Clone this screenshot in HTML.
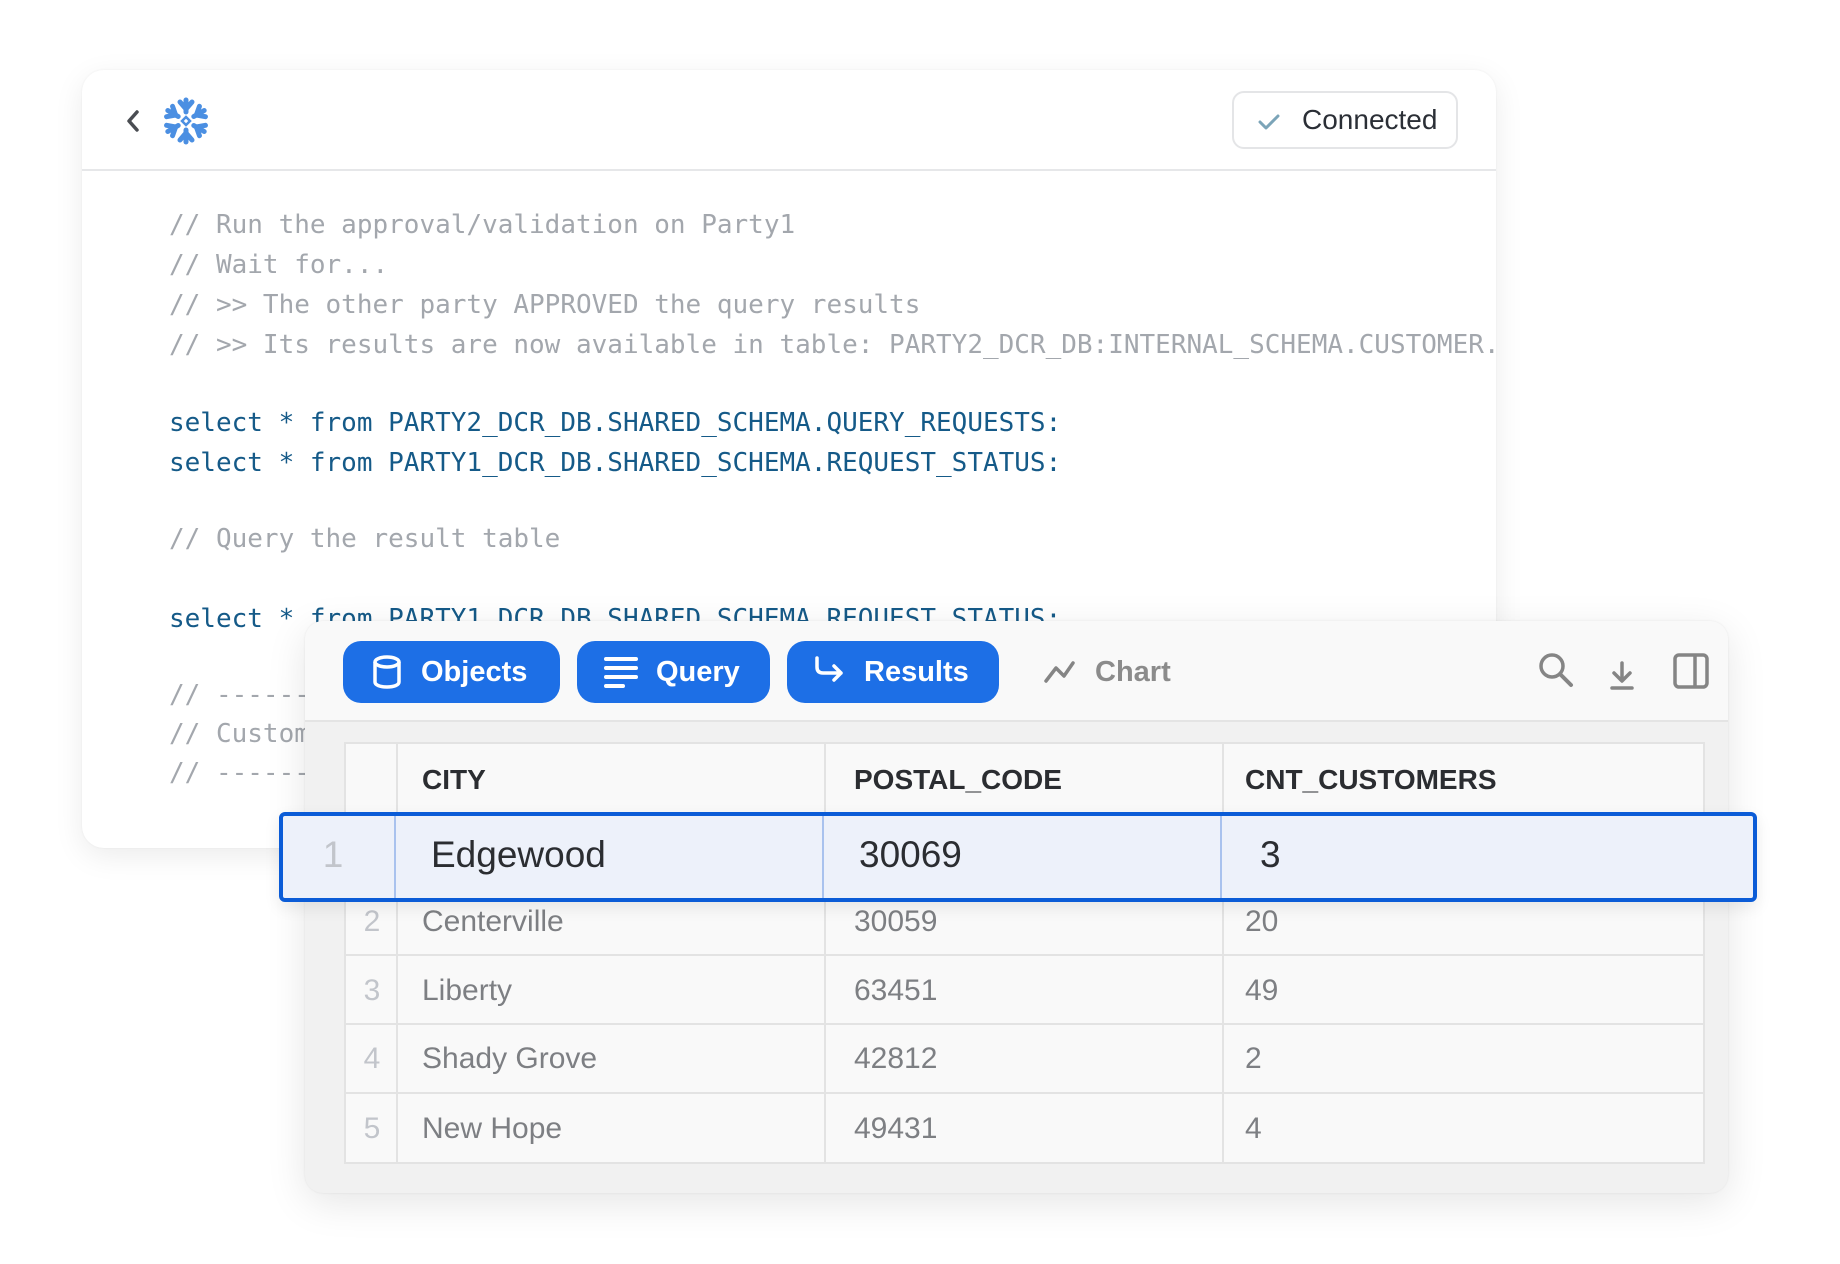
<!DOCTYPE html>
<html><head><meta charset="utf-8"><style>
*{margin:0;padding:0;box-sizing:border-box}
body{width:1840px;height:1264px;background:#fff;position:relative;overflow:hidden;font-family:"Liberation Sans",sans-serif}
.card{position:absolute;left:82px;top:70px;width:1414px;height:778px;background:#fff;border-radius:22px;box-shadow:0 8px 30px rgba(0,0,0,.08),0 0 2px rgba(0,0,0,.06);overflow:hidden}
.hdr{position:absolute;left:0;top:0;width:100%;height:101px;border-bottom:2px solid #e6e7e9}
.conn{position:absolute;left:1150px;top:21px;width:226px;height:58px;border:2px solid #e4e5e7;border-radius:12px;font-size:28px;color:#2b2f36;line-height:54px;padding-left:68px}
.code{position:absolute;left:87px;font-family:"DejaVu Sans Mono","Liberation Mono",monospace;font-size:26px;white-space:pre;line-height:40px;height:40px}
.c{color:#a3a7ad}.s{color:#155a88}
.panel{position:absolute;left:305px;top:621px;width:1423px;height:572px;background:#f1f1f1;border-radius:18px;box-shadow:0 10px 40px rgba(0,0,0,.10),0 0 2px rgba(0,0,0,.08);overflow:hidden}
.tb{position:absolute;left:0;top:0;width:100%;height:101px;background:#f9f9f9;border-bottom:2px solid #e4e4e4}
.btn{position:absolute;top:20px;height:62px;background:#1d6fe6;border-radius:18px;color:#fff;font-weight:bold;font-size:29px;line-height:62px}
.btn svg{position:absolute}
.btn span{position:absolute}
.tbl{position:absolute;left:344px;top:742px;width:1361px;height:422px;background:#f9f9f9;border:2px solid #e3e3e3}
.hl{position:absolute;left:279px;top:812px;width:1478px;height:90px;background:#edf1fa;border:4px solid #0b5cd7;border-radius:6px;box-shadow:0 6px 16px rgba(0,0,0,.08)}
.t{position:absolute;font-size:30px;color:#7d7f83;line-height:36px}
.n{position:absolute;font-size:30px;color:#c2c5cb;width:52px;text-align:center;line-height:36px;left:346px}
.h{position:absolute;font-size:28px;font-weight:bold;color:#2b2d31;line-height:36px;top:762px}
</style></head><body>
<div class="card">
 <div class="hdr">
  <svg style="position:absolute;left:43px;top:38px" width="16" height="26" viewBox="0 0 16 26"><path d="M12 4 L4 13 L12 22" fill="none" stroke="#4a4d52" stroke-width="3.5" stroke-linecap="round" stroke-linejoin="round"/></svg>
  <svg style="position:absolute;left:80px;top:27px" width="48" height="48" viewBox="-24 -24 48 48">
   <g fill="none" stroke="#4b8fe2" stroke-width="5" stroke-linecap="round" stroke-linejoin="round">
    <g><path d="M0 -9 V-21"/><path d="M-6 -19 L0 -12 L6 -19"/></g>
    <g transform="rotate(60)"><path d="M0 -9 V-21"/><path d="M-6 -19 L0 -12 L6 -19"/></g>
    <g transform="rotate(120)"><path d="M0 -9 V-21"/><path d="M-6 -19 L0 -12 L6 -19"/></g>
    <g transform="rotate(180)"><path d="M0 -9 V-21"/><path d="M-6 -19 L0 -12 L6 -19"/></g>
    <g transform="rotate(240)"><path d="M0 -9 V-21"/><path d="M-6 -19 L0 -12 L6 -19"/></g>
    <g transform="rotate(300)"><path d="M0 -9 V-21"/><path d="M-6 -19 L0 -12 L6 -19"/></g>
   </g>
   <path d="M0 -4 L4 0 L0 4 L-4 0Z" fill="none" stroke="#4b8fe2" stroke-width="2.5"/>
  </svg>
  <div class="conn"><svg style="position:absolute;left:24px;top:20px" width="22" height="18" viewBox="0 0 22 18"><path d="M2 9 L8 15 L20 3" fill="none" stroke="#7ba4b8" stroke-width="3" stroke-linecap="round" stroke-linejoin="round"/></svg>Connected</div>
 </div>
 <div class="code c" style="top:135px">// Run the approval/validation on Party1</div>
 <div class="code c" style="top:175px">// Wait for...</div>
 <div class="code c" style="top:215px">// &gt;&gt; The other party APPROVED the query results</div>
 <div class="code c" style="top:255px">// &gt;&gt; Its results are now available in table: PARTY2_DCR_DB:INTERNAL_SCHEMA.CUSTOMER.</div>
 <div class="code s" style="top:333px">select * from PARTY2_DCR_DB.SHARED_SCHEMA.QUERY_REQUESTS:</div>
 <div class="code s" style="top:373px">select * from PARTY1_DCR_DB.SHARED_SCHEMA.REQUEST_STATUS:</div>
 <div class="code c" style="top:449px">// Query the result table</div>
 <div class="code s" style="top:529px">select * from PARTY1_DCR_DB.SHARED_SCHEMA.REQUEST_STATUS:</div>
 <div class="code c" style="top:605px">// ------</div>
 <div class="code c" style="top:644px">// Custom</div>
 <div class="code c" style="top:683px">// ------</div>
 <div class="code s" style="top:770px">select</div>
</div>

<div class="panel">
 <div class="tb">
  <div class="btn" style="left:38px;width:217px"><svg style="left:28px;top:14px" width="32" height="34" viewBox="0 0 32 34"><ellipse cx="16" cy="7" rx="12" ry="5" fill="none" stroke="#fff" stroke-width="3.5"/><path d="M4 7 V27 C4 30 9 32 16 32 C23 32 28 30 28 27 V7" fill="none" stroke="#fff" stroke-width="3.5"/></svg><span style="left:78px">Objects</span></div>
  <div class="btn" style="left:272px;width:193px"><svg style="left:26px;top:14px" width="36" height="34" viewBox="0 0 36 34"><g stroke="#fff" stroke-width="4" stroke-linecap="round"><path d="M3 4H33M3 13H33M3 22H33M3 31H20"/></g></svg><span style="left:79px">Query</span></div>
  <div class="btn" style="left:482px;width:212px"><svg style="left:26px;top:14px" width="34" height="30" viewBox="0 0 34 30"><path d="M4 3 V12 C4 16 6 18 10 18 H28 M21 11 L28 18 L21 25" fill="none" stroke="#fff" stroke-width="3.5" stroke-linecap="round" stroke-linejoin="round"/></svg><span style="left:77px">Results</span></div>
  <svg style="position:absolute;left:738px;top:39px" width="34" height="26" viewBox="0 0 34 26"><path d="M3 21 L13 8 L21 16 L30 3" fill="none" stroke="#858585" stroke-width="3.5" stroke-linecap="round" stroke-linejoin="round"/></svg>
  <div style="position:absolute;left:790px;top:20px;font-size:29px;font-weight:bold;color:#8b8b8b;line-height:62px">Chart</div>
  <svg style="position:absolute;left:1232px;top:30px" width="38" height="38" viewBox="0 0 38 38"><circle cx="15" cy="15" r="11" fill="none" stroke="#858585" stroke-width="3.5"/><path d="M23 23 L34 34" stroke="#858585" stroke-width="4" stroke-linecap="round"/></svg>
  <svg style="position:absolute;left:1304px;top:40px" width="26" height="30" viewBox="0 0 26 30"><path d="M13 2 V19 M5 12 L13 20 L21 12 M3 27 H23" fill="none" stroke="#858585" stroke-width="3.5" stroke-linecap="round" stroke-linejoin="round"/></svg>
  <svg style="position:absolute;left:1368px;top:32px" width="36" height="36" viewBox="0 0 36 36"><rect x="2" y="2" width="32" height="32" rx="4" fill="none" stroke="#858585" stroke-width="3.5"/><path d="M22 2 V34" stroke="#858585" stroke-width="3.5"/></svg>
 </div>
</div>

<div class="tbl">
 <div style="position:absolute;left:50px;top:0;width:2px;height:100%;background:#e3e3e3"></div>
 <div style="position:absolute;left:478px;top:0;width:2px;height:100%;background:#e3e3e3"></div>
 <div style="position:absolute;left:876px;top:0;width:2px;height:100%;background:#e3e3e3"></div>
 <div style="position:absolute;left:0;top:210px;width:100%;height:2px;background:#e3e3e3"></div>
 <div style="position:absolute;left:0;top:279px;width:100%;height:2px;background:#e3e3e3"></div>
 <div style="position:absolute;left:0;top:348px;width:100%;height:2px;background:#e3e3e3"></div>
</div>
<div class="h" style="left:422px">CITY</div>
<div class="h" style="left:854px">POSTAL_CODE</div>
<div class="h" style="left:1245px">CNT_CUSTOMERS</div>

<div class="n" style="top:904px">2</div><div class="t" style="left:422px;top:904px">Centerville</div><div class="t" style="left:854px;top:904px">30059</div><div class="t" style="left:1245px;top:904px">20</div>
<div class="n" style="top:973px">3</div><div class="t" style="left:422px;top:973px">Liberty</div><div class="t" style="left:854px;top:973px">63451</div><div class="t" style="left:1245px;top:973px">49</div>
<div class="n" style="top:1041px">4</div><div class="t" style="left:422px;top:1041px">Shady Grove</div><div class="t" style="left:854px;top:1041px">42812</div><div class="t" style="left:1245px;top:1041px">2</div>
<div class="n" style="top:1111px">5</div><div class="t" style="left:422px;top:1111px">New Hope</div><div class="t" style="left:854px;top:1111px">49431</div><div class="t" style="left:1245px;top:1111px">4</div>

<div class="hl">
 <div style="position:absolute;left:111px;top:0;width:2px;height:100%;background:#a9c2ee"></div>
 <div style="position:absolute;left:539px;top:0;width:2px;height:100%;background:#a9c2ee"></div>
 <div style="position:absolute;left:937px;top:0;width:2px;height:100%;background:#a9c2ee"></div>
 <div style="position:absolute;left:20px;top:17px;width:60px;font-size:37px;color:#c2c5cb;line-height:44px;text-align:center">1</div>
 <div style="position:absolute;left:148px;top:17px;font-size:37px;color:#2b2d31;line-height:44px">Edgewood</div>
 <div style="position:absolute;left:576px;top:17px;font-size:37px;color:#2b2d31;line-height:44px">30069</div>
 <div style="position:absolute;left:977px;top:17px;font-size:37px;color:#2b2d31;line-height:44px">3</div>
</div>
</body></html>
